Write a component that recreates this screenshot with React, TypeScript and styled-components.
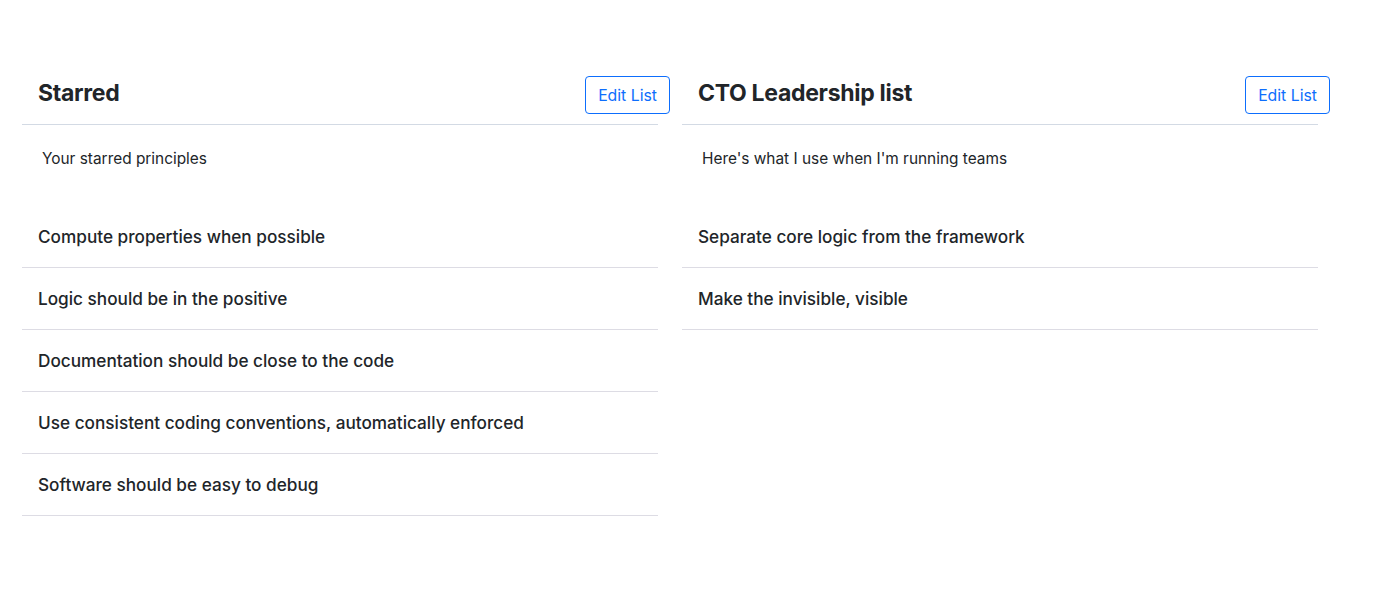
import React from 'react';
import styled, { createGlobalStyle } from 'styled-components';

const GlobalStyle = createGlobalStyle`
  body {
    margin: 0;
    background: #ffffff;
    color: #212529;
    font-family: Inter, "Liberation Sans", sans-serif;
  }
`;

interface PrincipleList {
  title: string;
  description: string;
  items: string[];
}

const lists: PrincipleList[] = [
  {
    title: 'Starred',
    description: 'Your starred principles',
    items: [
      'Compute properties when possible',
      'Logic should be in the positive',
      'Documentation should be close to the code',
      'Use consistent coding conventions, automatically enforced',
      'Software should be easy to debug',
    ],
  },
  {
    title: 'CTO Leadership list',
    description: "Here's what I use when I'm running teams",
    items: ['Separate core logic from the framework', 'Make the invisible, visible'],
  },
];

const App: React.FC = () => {
  return (
    <>
      <GlobalStyle />
      <Page>
        {lists.map((list) => (
          <ListCard key={list.title}>
            <Header>
              <Title>{list.title}</Title>
              <EditButton type="button">Edit List</EditButton>
            </Header>
            <Description>{list.description}</Description>
            <Items>
              {list.items.map((item) => (
                <Item key={item}>{item}</Item>
              ))}
            </Items>
          </ListCard>
        ))}
      </Page>
    </>
  );
};

const Page = styled.div`
  display: grid;
  grid-template-columns: 636px 636px;
  column-gap: 24px;
  padding: 76px 0 0 22px;
  align-items: start;
`;

const ListCard = styled.section`
  display: flex;
  flex-direction: column;
`;

const Header = styled.div`
  display: flex;
  align-items: flex-start;
  justify-content: space-between;
  padding: 0 0 10px 16px;
  border-bottom: 1px solid #d3dae4;
`;

const Title = styled.h2`
  margin: 0;
  padding-top: 3px;
  font-size: 23px;
  line-height: 29px;
  font-weight: 700;
  letter-spacing: -0.3px;
`;

const EditButton = styled.button`
  margin-right: -12px;
  height: 38px;
  padding: 0 12px;
  font-family: Inter, "Liberation Sans", sans-serif;
  font-size: 15.8px;
  color: #0d6efd;
  background: #ffffff;
  border: 1px solid #0d6efd;
  border-radius: 4px;
  cursor: pointer;
`;

const Description = styled.p`
  margin: 0;
  padding: 24px 0 37px 20px;
  font-size: 15.4px;
  line-height: 20px;
`;

const Items = styled.ul`
  list-style: none;
  margin: 0;
  padding: 0;
`;

const Item = styled.li`
  height: 61px;
  display: flex;
  align-items: center;
  padding-left: 16px;
  border-bottom: 1px solid #dddce4;
  font-size: 17.2px;
  font-weight: 500;
`;

export default App;
